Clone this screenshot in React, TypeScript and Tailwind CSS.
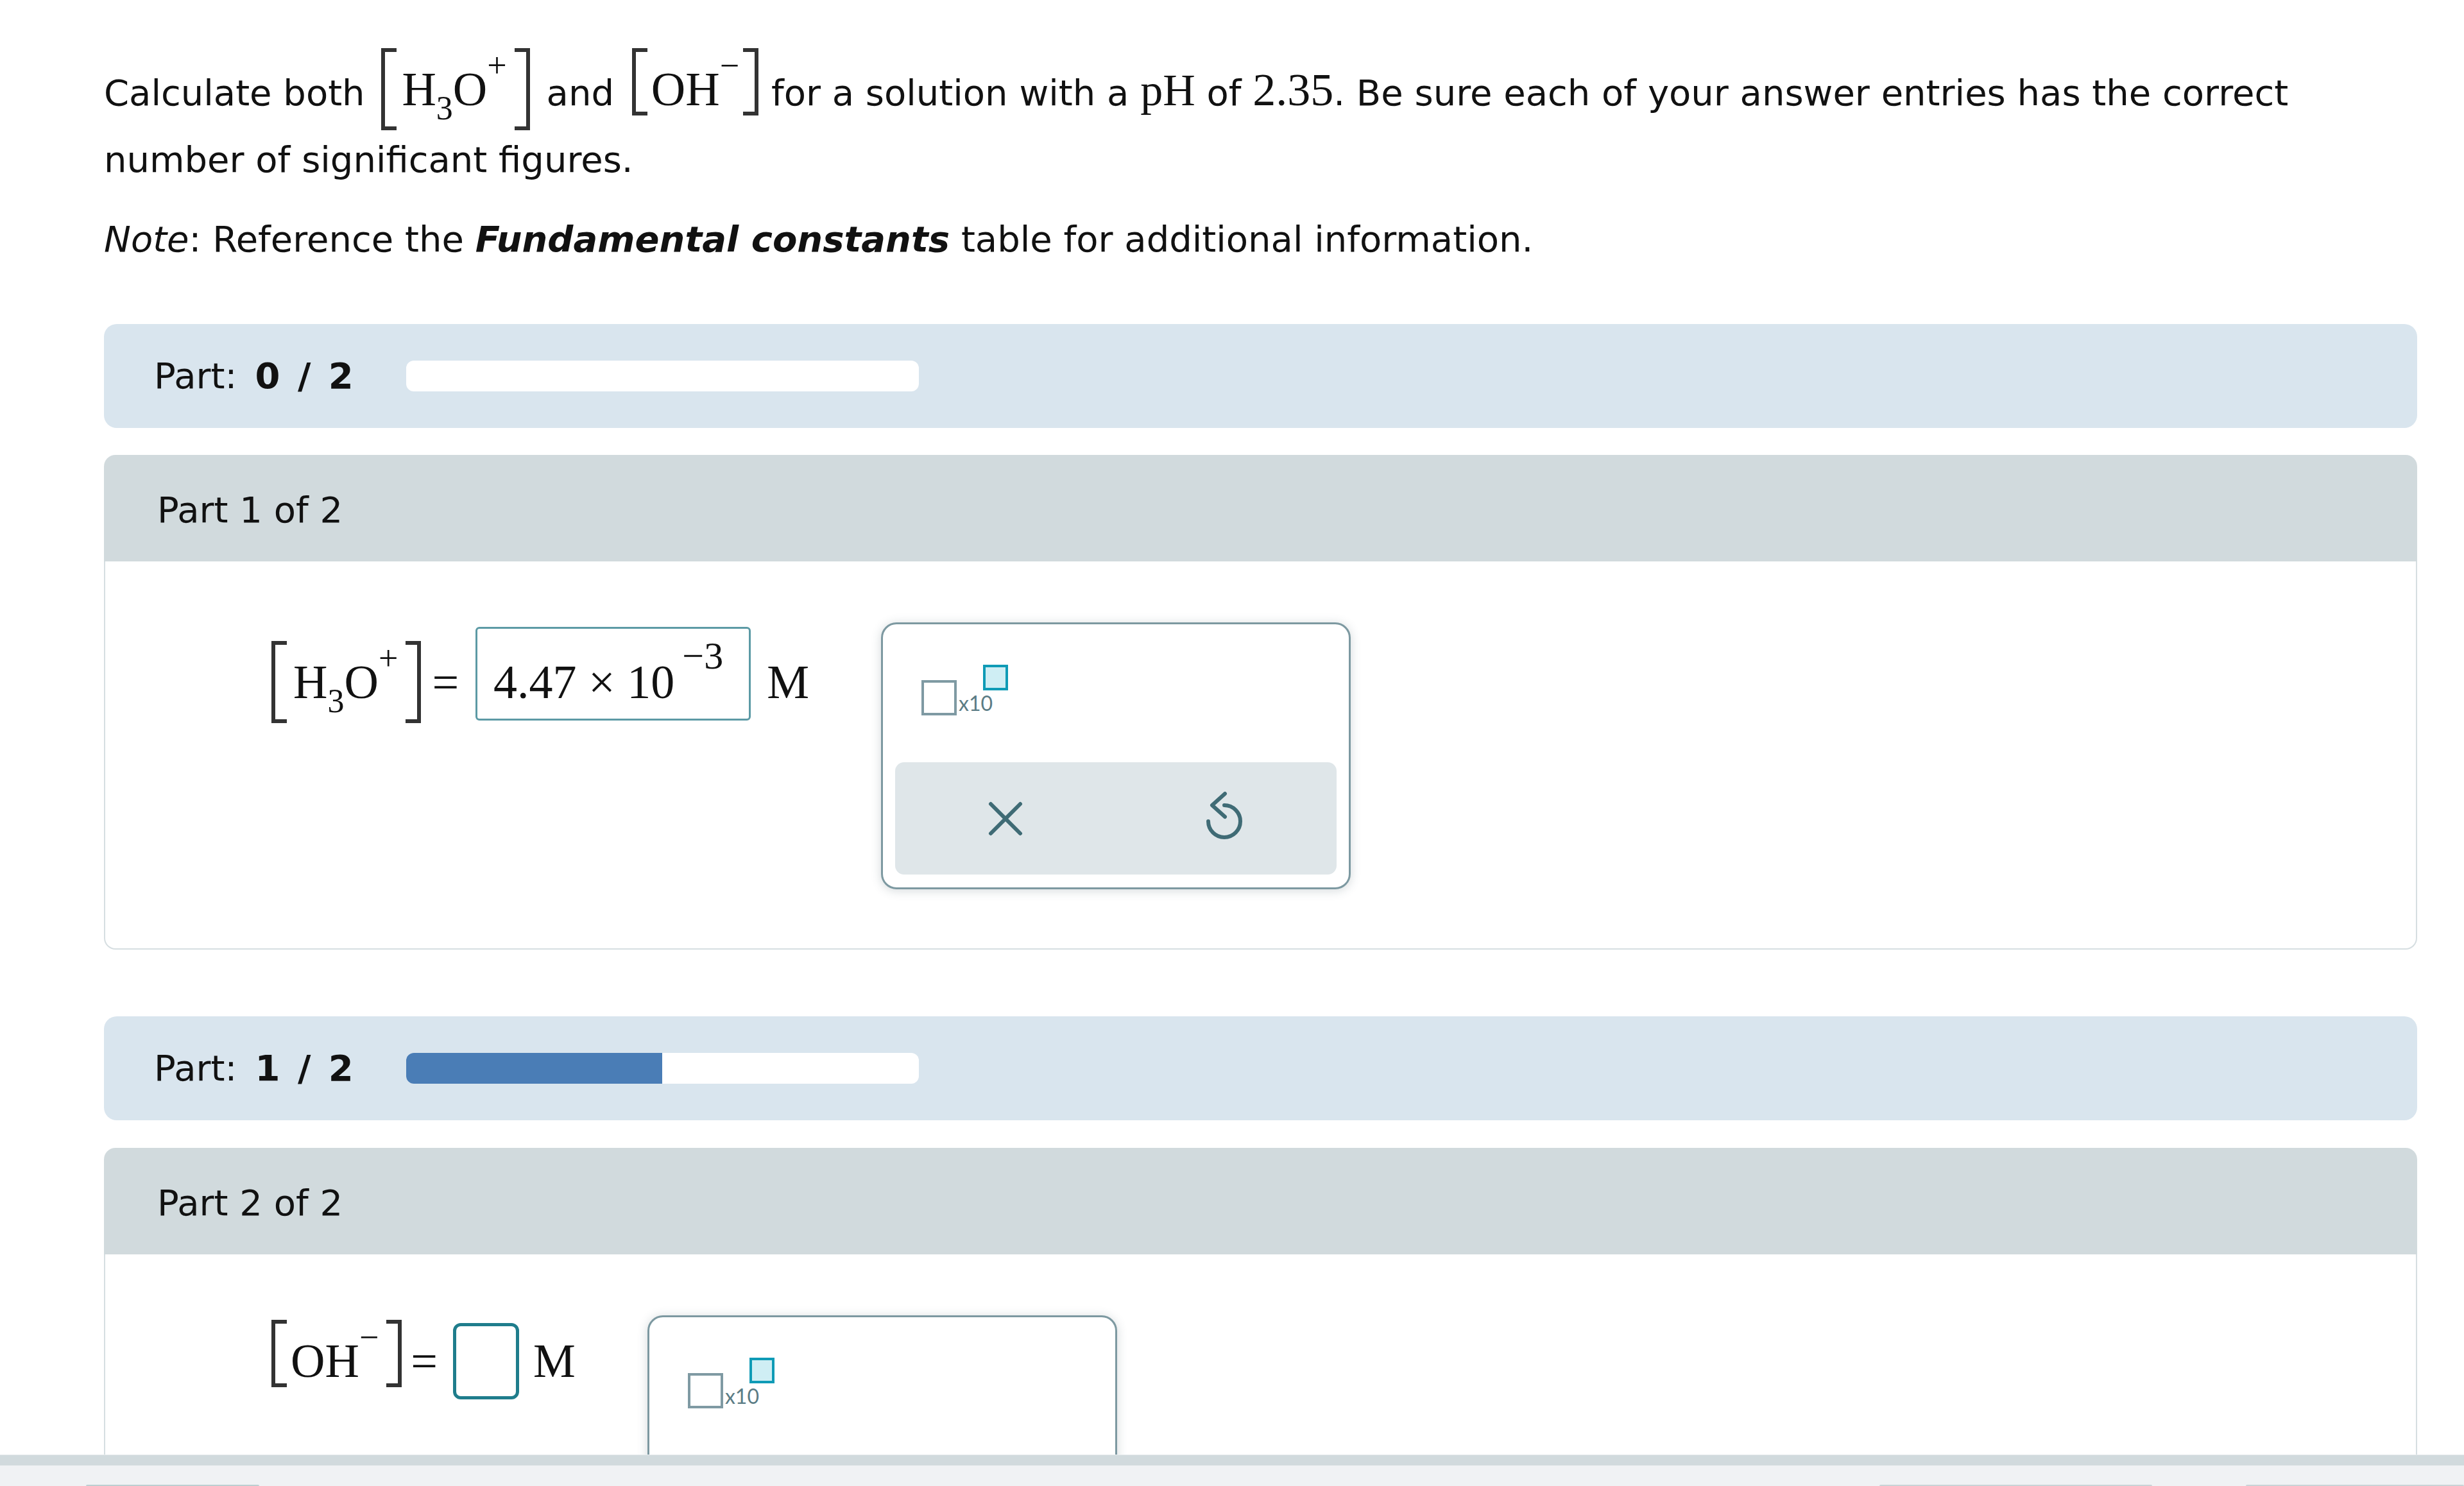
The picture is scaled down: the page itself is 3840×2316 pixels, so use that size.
import type { ReactNode } from 'react';

const serif = "font-['Liberation_Serif','Times_New_Roman',serif]";

function Bracket({ children, className }: { children: ReactNode; className: string }) {
  return (
    <span
      className={`relative inline-block ${serif} text-[74px] leading-[74px] before:absolute before:inset-y-0 before:left-0 before:w-[24px] before:border-y-[6px] before:border-l-[6px] before:border-[#333] before:content-[''] after:absolute after:inset-y-0 after:right-0 after:w-[24px] after:border-y-[6px] after:border-r-[6px] after:border-[#333] after:content-[''] ${className}`}
    >
      {children}
    </span>
  );
}

function Sub({ children }: { children: ReactNode }) {
  return <span className="relative top-[22px] text-[52px] leading-none">{children}</span>;
}

function Sup({ children }: { children: ReactNode }) {
  return <span className="relative top-[-44px] text-[54px] leading-none">{children}</span>;
}

function H3O({ className }: { className: string }) {
  return (
    <Bracket className={className}>
      H<Sub>3</Sub>O<Sup>+</Sup>
    </Bracket>
  );
}

function OH({ className }: { className: string }) {
  return (
    <Bracket className={className}>
      OH<Sup>−</Sup>
    </Bracket>
  );
}

function ProgressBar({ done, fill }: { done: number; fill: boolean }) {
  return (
    <div className="flex h-[162px] items-center rounded-[20px] bg-[#d9e5ee] pl-[78px]">
      <span>
        Part:<b className="ml-[28px] font-bold tracking-[4px]">{done} / 2</b>
      </span>
      <div className="ml-[78px] flex h-[48px] w-[799px] overflow-hidden rounded-[12px] bg-white">
        {fill && <div className="h-full w-[399px] bg-[#4a7db6]" />}
      </div>
    </div>
  );
}

function Palette() {
  return (
    <div className="ml-[112px] flex h-[416px] w-[732px] shrink-0 flex-col rounded-[24px] border-[3px] border-[#7d99a1] bg-white px-[16px] pb-[20px] shadow-[0_2px_16px_rgba(60,80,90,0.22)]">
      <div className="flex items-start pl-[44px] pt-[63px]">
        <div className="mt-[24px] h-[55px] w-[55px] border-[4px] border-[#7f9aa3]" />
        <span className="mb-[3px] ml-[3px] self-end font-['Lato','Open_Sans',sans-serif] text-[32px] leading-none text-[#5b7c85]">
          x10
        </span>
        <div className="ml-[-15px] h-[40px] w-[39px] border-[4px] border-[#0f9bb6] bg-[#cfeef4]" />
      </div>
      <div className="mx-[3px] mt-[73px] flex h-[175px] rounded-[14px] bg-[#dfe6e9]">
        <div className="flex flex-1 items-center justify-center">
          <svg width="54" height="54" viewBox="0 0 54 54" fill="none" stroke="#3f6b75" strokeWidth="6" strokeLinecap="round">
            <path d="M4 4 50 50M50 4 4 50" />
          </svg>
        </div>
        <div className="flex flex-1 items-center justify-center">
          <svg width="64" height="76" viewBox="0 0 64 76" fill="none" stroke="#3f6b75" strokeWidth="6" strokeLinecap="round" strokeLinejoin="round" className="ml-[-6px] mt-[-10px]">
            <path d="M32 22A25 25 0 1 1 7 47" />
            <path d="M33 4 13 22 33 40" />
          </svg>
        </div>
      </div>
    </div>
  );
}

function Card({ title, children }: { title: string; children: ReactNode }) {
  return (
    <div>
      <div className="flex h-[166px] items-center rounded-t-[18px] bg-[#d1dadd] pl-[83px] pt-[5px]">{title}</div>
      <div className="rounded-b-[18px] border-2 border-t-0 border-[#d6dee1] bg-white">{children}</div>
    </div>
  );
}

export default function App() {
  return (
    <div className="flex h-screen flex-col overflow-hidden bg-white font-['DejaVu_Sans',Verdana,sans-serif] text-[56px] text-[#111]">
      <main className="min-h-0 flex-1 overflow-hidden pl-[162px] pr-[73px] pt-[75px]">
        <p className="whitespace-nowrap leading-[91px]">
          Calculate both <H3O className="mx-[8px] pl-[32px] pr-[36px] pt-[27px] pb-[27px]" /> and{' '}
          <OH className="ml-[10px] mr-[2px] pl-[30px] pr-[30px] pt-[27px] pb-[4px]" /> for a solution with a{' '}
          <span className={`${serif} text-[70px]`}>pH</span> of <span className={`${serif} text-[72px]`}>2.35</span>. Be
          sure each of your answer entries has the correct
          <br />
          number of significant figures.
        </p>
        <p className="mt-[33px] leading-[91px]">
          <i>Note</i>: Reference the <b className="font-bold italic">Fundamental constants</b> table for additional
          information.
        </p>

        <div className="mt-[87px]">
          <ProgressBar done={0} fill={false} />
        </div>

        <div className="mt-[42px]">
          <Card title="Part 1 of 2">
            <div className="flex items-start pb-[92px] pl-[259px] pt-[95px]">
              <div className="mt-[7px] flex items-baseline">
                <H3O className="pl-[34px] pr-[36px] pt-[27px] pb-[27px]" />
                <span className={`${serif} ml-[17px] text-[74px] leading-[74px]`}>=</span>
                <div className={`${serif} ml-[26px] rounded-[6px] border-[3px] border-[#5c9aa5] pb-[20px] pl-[25px] pr-[40px] pt-[46px] text-[74px] leading-[74px]`}>
                  4.47 × 10
                  <span className="relative top-[-46px] ml-[12px] text-[60px] leading-none">−3</span>
                </div>
                <span className={`${serif} ml-[25px] text-[74px] leading-[74px]`}>M</span>
              </div>
              <Palette />
            </div>
          </Card>
        </div>

        <div className="mt-[104px]">
          <ProgressBar done={1} fill={true} />
        </div>

        <div className="mt-[43px]">
          <Card title="Part 2 of 2">
            <div className="flex items-start pb-[92px] pl-[259px] pt-[95px]">
              <div className="mt-[7px] flex items-baseline">
                <OH className="pl-[30px] pr-[36px] pt-[27px] pb-[4px]" />
                <span className={`${serif} ml-[14px] text-[74px] leading-[74px]`}>=</span>
                <div className={`${serif} ml-[24px] w-[103px] rounded-[12px] border-[5px] border-[#1f7d8c] pb-[18px] pt-[17px] text-[74px] leading-[74px]`}>
                  {'\u00a0'}
                </div>
                <span className={`${serif} ml-[22px] text-[74px] leading-[74px]`}>M</span>
              </div>
              <Palette />
            </div>
          </Card>
        </div>
      </main>

      <div className="h-[17px] shrink-0 border-t border-[#e4eaec] bg-[#d1dadd]" />
      <div className="flex h-[32px] shrink-0 items-end bg-[#f0f2f4]">
        <div className="ml-[134px] h-[2px] w-[270px] rounded-t bg-[#bccfd1]" />
        <div className="ml-[2525px] h-[2px] w-[425px] rounded-t bg-[#c9d3d6]" />
        <div className="ml-[146px] h-[2px] w-[340px] rounded-t bg-[#c9d3d6]" />
      </div>
    </div>
  );
}
